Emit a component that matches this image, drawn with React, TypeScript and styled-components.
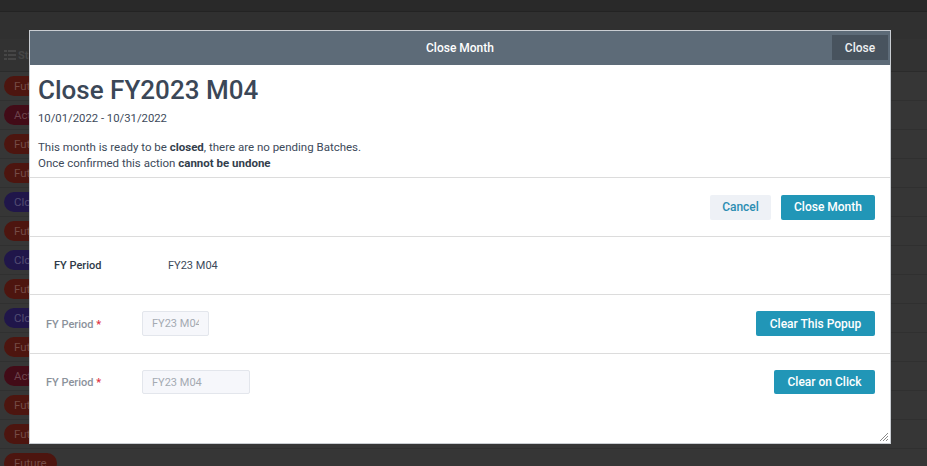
import React from "react";
import styled, { createGlobalStyle } from "styled-components";

const GlobalStyle = createGlobalStyle`
  html, body {
    margin: 0;
    padding: 0;
    width: 927px;
    height: 466px;
    overflow: hidden;
    background: #2c2c2c;
    font-family: Roboto, "Liberation Sans", Arial, sans-serif;
  }
  * { box-sizing: border-box; }
`;

type PillKind = "Future" | "Active" | "Closed";

const rows: PillKind[] = [
    "Future", "Active", "Future", "Future", "Closed", "Future", "Closed",
    "Future", "Closed", "Future", "Active", "Future", "Future", "Future",
];

const pillColors: { [key in PillKind]: string } = {
    Future: "#521710",
    Active: "#470c19",
    Closed: "#22184f",
};

const Page = styled.div`
    position: relative;
    width: 927px;
    height: 466px;
    overflow: hidden;
    display: flex;
    flex-direction: column;
    background: #3a3a3a;
`;

const TopBar = styled.div`
    height: 12px;
    flex-shrink: 0;
    background: #2c2c2c;
    border-bottom: 1px solid #262626;
`;

const SubBar = styled.div`
    height: 27px;
    flex-shrink: 0;
    background: #333333;
`;

const TableHead = styled.div`
    height: 33px;
    flex-shrink: 0;
    display: flex;
    align-items: center;
    padding-left: 4px;
    gap: 2px;
    background: #363636;
    border-bottom: 1px solid #2e2e2e;
    color: #4b4b4b;
    font-size: 11px;
    font-weight: 700;
`;

const TableRow = styled.div`
    height: 29px;
    flex-shrink: 0;
    display: flex;
    align-items: center;
    padding-left: 4px;
    border-bottom: 1px solid #343434;
`;

const Pill = styled.span<{ $kind: PillKind }>`
    height: 20px;
    padding: 0 10px;
    border-radius: 10px;
    display: inline-flex;
    align-items: center;
    background: ${(p) => pillColors[p.$kind]};
    color: rgba(255, 255, 255, 0.25);
    font-size: 11.5px;
`;

const Overlay = styled.div`
    position: absolute;
    inset: 0;
    background: rgba(0, 0, 0, 0.06);
`;

const Modal = styled.div`
    position: absolute;
    left: 29px;
    top: 30px;
    width: 862px;
    height: 414px;
    background: #ffffff;
    border: 1px solid #c9cdd2;
    display: flex;
    flex-direction: column;
`;

const ModalHeader = styled.div`
    position: relative;
    height: 34px;
    flex-shrink: 0;
    background: #5d6b78;
    display: flex;
    align-items: center;
    justify-content: center;
    color: #ffffff;
    font-size: 12px;
    font-weight: 500;
`;

const HeaderClose = styled.button`
    position: absolute;
    right: 2px;
    top: 4px;
    width: 56px;
    height: 25px;
    border: none;
    background: #48535e;
    color: #eef0f2;
    font-family: inherit;
    font-size: 12px;
    font-weight: 500;
    cursor: pointer;
`;

const Intro = styled.div`
    padding: 9px 9px 0 8px;
    height: 113px;
    flex-shrink: 0;
    border-bottom: 1px solid #dcdcdc;
    color: #3d4a5a;
`;

const Title = styled.h1`
    margin: 0;
    font-size: 26px;
    font-weight: 500;
    line-height: 32px;
    color: #3b4757;
`;

const DateRange = styled.div`
    margin-top: 6px;
    font-size: 11.3px;
    line-height: 14px;
`;

const Note = styled.p`
    margin: 13px 0 0 0;
    font-size: 11.5px;
    line-height: 16px;

    b { font-weight: 700; color: #333e4c; }
`;

const Section = styled.div<{ $height: number; $last?: boolean }>`
    height: ${(p) => p.$height}px;
    flex-shrink: 0;
    display: flex;
    align-items: center;
    padding: 0 15px 0 16px;
    border-bottom: ${(p) => (p.$last ? "none" : "1px solid #dcdcdc")};
`;

const Actions = styled(Section)`
    justify-content: flex-end;
    gap: 10px;
`;

const FieldRow = styled(Section)`
    align-items: flex-start;
    padding-top: 16px;
`;

const Spacer = styled.div`
    flex: 1;
`;

const Button = styled.button<{ $variant?: "primary" | "light"; $width: number; $height?: number }>`
    width: ${(p) => p.$width}px;
    height: ${(p) => p.$height ?? 25}px;
    border: none;
    border-radius: 2px;
    background: ${(p) => (p.$variant === "light" ? "#eef1f6" : "#2196b7")};
    color: ${(p) => (p.$variant === "light" ? "#2b8db2" : "#ffffff")};
    font-family: inherit;
    font-size: 12px;
    font-weight: 500;
    cursor: pointer;
    flex-shrink: 0;
`;

const StaticLabel = styled.div`
    width: 122px;
    padding-left: 8px;
    font-size: 11px;
    font-weight: 500;
    color: #2f3a47;
`;

const StaticValue = styled.div`
    font-size: 11px;
    color: #3d4a5a;
`;

const FieldLabel = styled.label<{ $top: number }>`
    width: 96px;
    margin-top: ${(p) => p.$top}px;
    font-size: 11px;
    font-weight: 500;
    color: #8b929b;

    span { color: #e0313f; }
`;

const Input = styled.input<{ $width: number; $height?: number }>`
    width: ${(p) => p.$width}px;
    height: ${(p) => p.$height ?? 25}px;
    border: 1px solid #e3e6ec;
    border-radius: 2px;
    background: #f6f7fb;
    padding: 0 9px;
    font-family: inherit;
    font-size: 11px;
    color: #3d4a5a;
    outline: none;

    &::placeholder { color: #a4aab2; }
`;

const ResizeGrip = styled.svg`
    position: absolute;
    right: 1px;
    bottom: 1px;
`;

const ListIcon = () => (
    <svg width="12" height="10" viewBox="0 0 12 10" fill="#4b4b4b">
        <rect x="0" y="0" width="3" height="2" />
        <rect x="4" y="0" width="8" height="2" />
        <rect x="0" y="4" width="3" height="2" />
        <rect x="4" y="4" width="8" height="2" />
        <rect x="0" y="8" width="3" height="2" />
        <rect x="4" y="8" width="8" height="2" />
    </svg>
);

export default function App() {
    return (
        <>
            <GlobalStyle />
            <Page>
                <TopBar />
                <SubBar />
                <TableHead>
                    <ListIcon />
                    <span>Status</span>
                </TableHead>
                {rows.map((kind, i) => (
                    <TableRow key={i}>
                        <Pill $kind={kind}>{kind}</Pill>
                    </TableRow>
                ))}
                <Overlay />
                <Modal>
                    <ModalHeader>
                        Close Month
                        <HeaderClose>Close</HeaderClose>
                    </ModalHeader>
                    <Intro>
                        <Title>Close FY2023 M04</Title>
                        <DateRange>10/01/2022 - 10/31/2022</DateRange>
                        <Note>
                            This month is ready to be <b>closed</b>, there are no pending Batches.
                            <br />
                            Once confirmed this action <b>cannot be undone</b>
                        </Note>
                    </Intro>
                    <Actions $height={59}>
                        <Button $variant="light" $width={61}>Cancel</Button>
                        <Button $width={94}>Close Month</Button>
                    </Actions>
                    <Section $height={58}>
                        <StaticLabel>FY Period</StaticLabel>
                        <StaticValue>FY23 M04</StaticValue>
                    </Section>
                    <FieldRow $height={59}>
                        <FieldLabel $top={7}>
                            FY Period <span>*</span>
                        </FieldLabel>
                        <Input $width={67} placeholder="FY23 M04" />
                        <Spacer />
                        <Button $width={119}>Clear This Popup</Button>
                    </FieldRow>
                    <FieldRow $height={90} $last>
                        <FieldLabel $top={6}>
                            FY Period <span>*</span>
                        </FieldLabel>
                        <Input $width={108} $height={24} placeholder="FY23 M04" />
                        <Spacer />
                        <Button $width={101} $height={24}>Clear on Click</Button>
                    </FieldRow>
                    <ResizeGrip width="10" height="10" viewBox="0 0 10 10">
                        <line x1="9" y1="1" x2="1" y2="9" stroke="#8a8a8a" strokeWidth="1" />
                        <line x1="9" y1="4" x2="4" y2="9" stroke="#8a8a8a" strokeWidth="1" />
                        <line x1="9" y1="7" x2="7" y2="9" stroke="#8a8a8a" strokeWidth="1" />
                    </ResizeGrip>
                </Modal>
            </Page>
        </>
    );
}
